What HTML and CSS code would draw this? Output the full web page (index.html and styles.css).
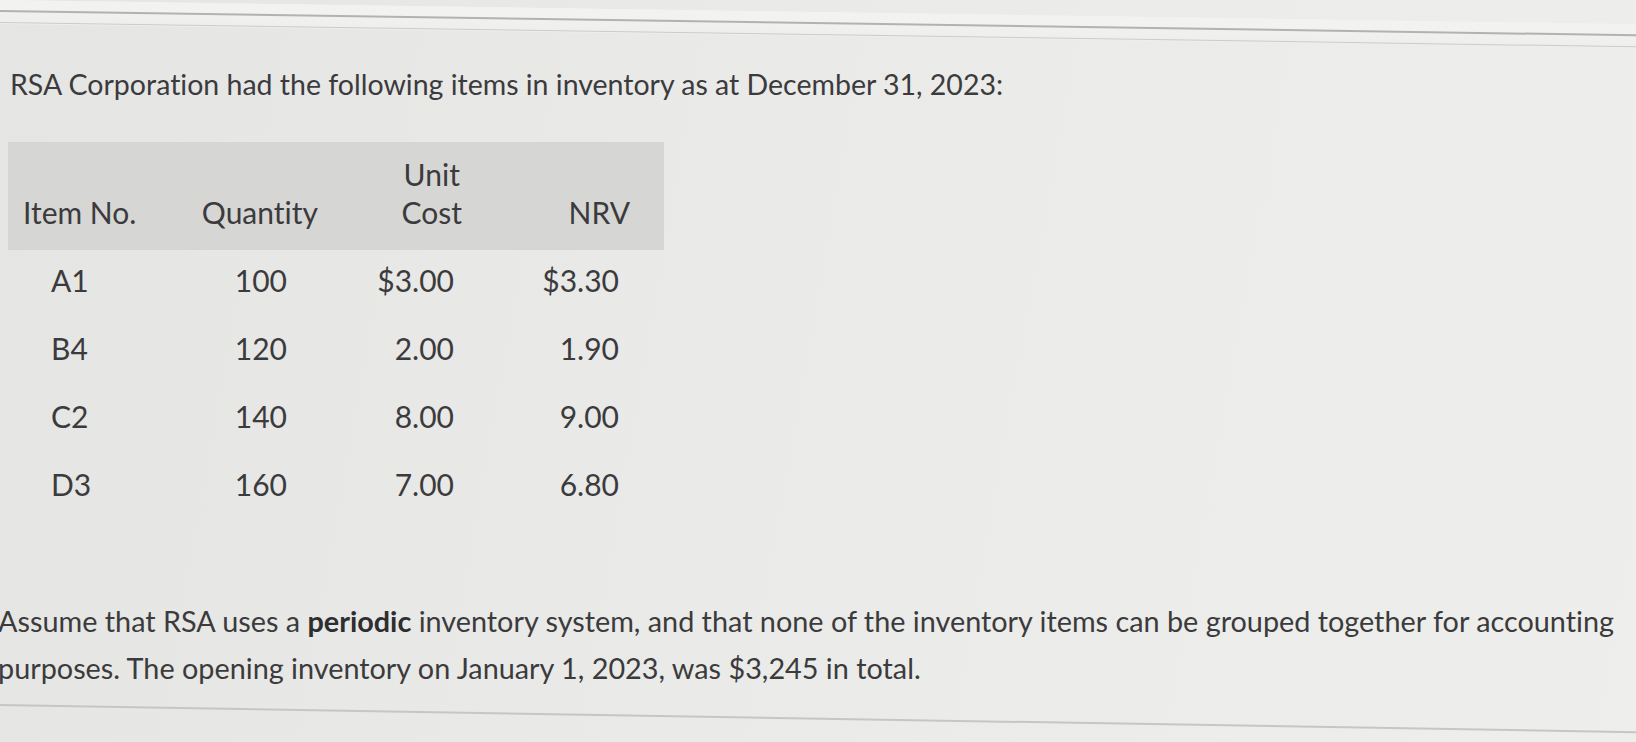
FILE: index.html
```html
<!DOCTYPE html>
<html>
<head>
<meta charset="utf-8">
<link rel="stylesheet" href="styles.css">
</head>
<body>
<div class="page">
  <div class="edge">
    <div class="edge-line one"></div>
    <div class="edge-line two"></div>
  </div>
  <p class="intro">RSA Corporation had the following items in inventory as at December 31, 2023:</p>
  <div class="table">
    <div class="row head">
      <div class="cell c1">Item No.</div>
      <div class="cell c2">Quantity</div>
      <div class="cell c3"><span class="stack">Unit<br>Cost</span></div>
      <div class="cell c4">NRV</div>
    </div>
    <div class="body">
      <div class="row">
        <div class="cell c1">A1</div>
        <div class="cell c2">100</div>
        <div class="cell c3">$3.00</div>
        <div class="cell c4">$3.30</div>
      </div>
      <div class="row">
        <div class="cell c1">B4</div>
        <div class="cell c2">120</div>
        <div class="cell c3">2.00</div>
        <div class="cell c4">1.90</div>
      </div>
      <div class="row">
        <div class="cell c1">C2</div>
        <div class="cell c2">140</div>
        <div class="cell c3">8.00</div>
        <div class="cell c4">9.00</div>
      </div>
      <div class="row">
        <div class="cell c1">D3</div>
        <div class="cell c2">160</div>
        <div class="cell c3">7.00</div>
        <div class="cell c4">6.80</div>
      </div>
    </div>
  </div>
  <p class="note">Assume that RSA uses a <b>periodic</b> inventory system, and that none of the inventory items can be grouped together for accounting purposes. The opening inventory on January 1, 2023, was $3,245 in total.</p>
  <div class="foot-line"></div>
</div>
</body>
</html>
```
FILE: styles.css
```css
html, body {
  margin: 0;
  padding: 0;
}
body {
  width: 1636px;
  height: 742px;
  overflow: hidden;
  background: linear-gradient(100deg, #e5e5e3 0%, #eaeae8 45%, #eeeeec 100%);
  font-family: Lato, "Open Sans", sans-serif;
  font-variant-ligatures: none;
  color: #3b3b3d;
}
.page {
  display: flex;
  flex-direction: column;
  height: 742px;
}
.edge {
  height: 24px;
  display: flex;
  flex-direction: column;
  background: linear-gradient(180deg, #f3f3f1 0%, #eeeeec 100%);
  transform-origin: 0 0;
  transform: rotate(0.85deg);
  width: 1700px;
}
.edge-line.one {
  height: 10px;
  border-bottom: 2px solid #b2b2b1;
  background: #f2f2f0;
}
.edge-line.two {
  height: 10px;
  border-bottom: 1px solid #cbcbc9;
}
.intro {
  margin: 42px 0 0 10px;
  font-size: 28.5px;
  line-height: 36px;
}
.table {
  margin: 40px 0 0 8px;
  display: flex;
  flex-direction: column;
  width: 656px;
  font-size: 30px;
}
.row {
  display: grid;
  grid-template-columns: 162px 160px 160px 174px;
  height: 60px;
  align-items: center;
}
.body {
  display: flex;
  flex-direction: column;
  gap: 8px;
}
.row.head {
  height: 108px;
  background: #d6d6d4;
  align-items: end;
  padding-bottom: 19px;
  box-sizing: border-box;
  line-height: 38px;
}
.cell {
  text-align: right;
}
.cell.c1 { text-align: left; padding-left: 43px; }
.cell.c2 { padding-right: 43px; }
.cell.c3 { padding-right: 36px; }
.cell.c4 { padding-right: 45px; }
.head .cell.c1 { padding-left: 15px; }
.head .cell.c2 { padding-right: 12px; }
.head .cell.c3 { padding-right: 28px; }
.head .cell.c4 { padding-right: 34px; }
.stack {
  display: inline-block;
  text-align: center;
}
.note {
  margin: 84px 0 0 -2px;
  font-size: 28.8px;
  line-height: 47px;
  width: 1625px;
}
.note b {
  font-weight: 700;
  color: #2e2e30;
}
.foot-line {
  margin-top: 12px;
  height: 0;
  border-top: 2px solid #c6c6c4;
  width: 1700px;
  transform-origin: 0 0;
  transform: rotate(0.95deg);
}
```
